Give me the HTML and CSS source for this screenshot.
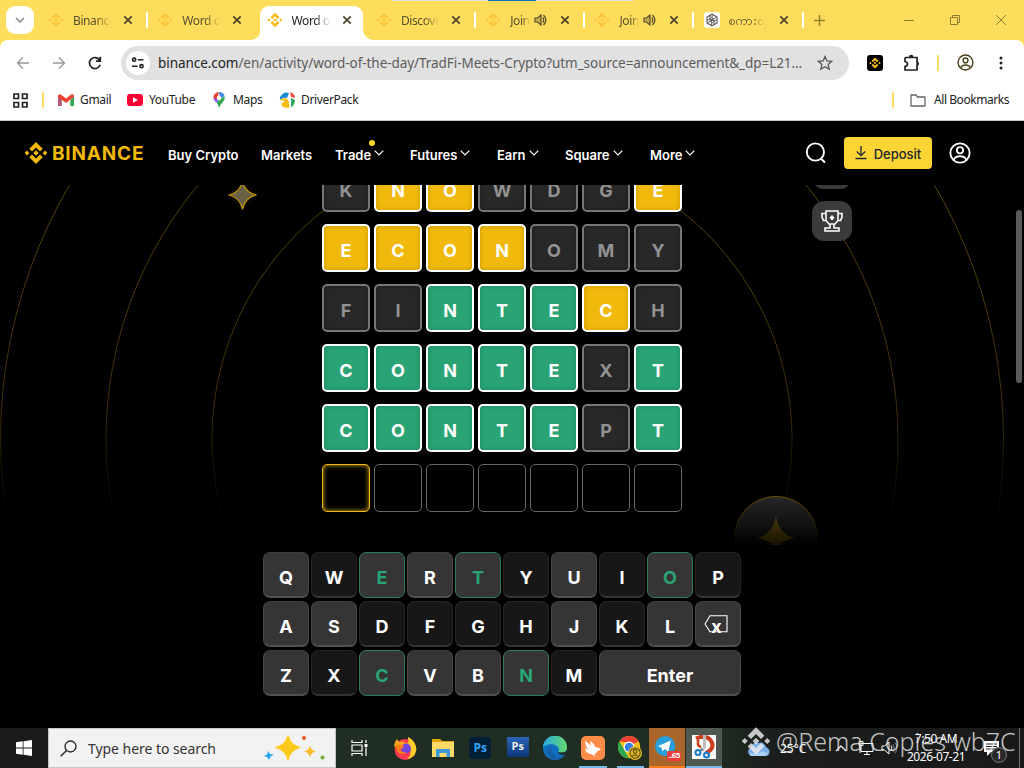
FILE: index.html
```html
<!DOCTYPE html>
<html lang="en">
<head>
<meta charset="utf-8">
<title>Word of the Day</title>
<link rel="stylesheet" href="styles.css">
</head>
<body>
<svg class="defs" aria-hidden="true">
  <symbol id="bnb" viewBox="0 0 24 24"><path d="M12 1l6.7 6.7-2.7 2.7-4-4-4 4-2.7-2.7zM3 9.6L5.4 12 3 14.4.6 12zM12 9.3l2.7 2.7-2.7 2.7L9.3 12zM21 9.6l2.4 2.4-2.4 2.4-2.4-2.4zM8 13.6l4 4 4-4 2.7 2.7L12 23l-6.7-6.7z"/></symbol>
  <symbol id="x" viewBox="0 0 10 10"><path d="M1.3 1.3l7.4 7.4M8.7 1.3L1.3 8.7" fill="none" stroke="currentColor" stroke-width="1.7"/></symbol>
  <symbol id="audio" viewBox="0 0 14 12"><path d="M1 4h2.500L7 1v10L3.500 8H1z" fill="currentColor" fill-opacity=".35" stroke="currentColor" stroke-width="1.2"/><path d="M8.700 3.500q2 2.500 0 5M9.500 1q4.800 5 0 10" fill="none" stroke="currentColor" stroke-width="1.300"/></symbol>
  <symbol id="chev" viewBox="0 0 10 6"><path d="M.7.7L5 5 9.300.7" fill="none" stroke="currentColor" stroke-width="1.200"/></symbol>
  <symbol id="person" viewBox="0 0 24 24"><g fill="none" stroke="currentColor" stroke-width="2"><circle cx="12" cy="12" r="10.500"/><circle cx="12" cy="9" r="3.400"/><path d="M5 19.500q2-4 7-4t7 4"/></g></symbol>
</svg>

<header class="tabstrip">
  <div class="tab-search"><svg viewBox="0 0 10 6"><path d="M1 1l4 4 4-4" fill="none" stroke="#8a8a8a" stroke-width="1.600"/></svg></div>
  <div class="tabs">
    <div class="tab"><svg class="fav"><use href="#bnb"/></svg><span class="title">Binance</span><svg class="close"><use href="#x"/></svg><i class="sep"></i></div>
    <div class="tab"><svg class="fav"><use href="#bnb"/></svg><span class="title">Word of</span><svg class="close"><use href="#x"/></svg></div>
    <div class="tab active"><svg class="fav"><use href="#bnb"/></svg><span class="title">Word of</span><svg class="close"><use href="#x"/></svg></div>
    <div class="tab"><svg class="fav"><use href="#bnb"/></svg><span class="title">Discover</span><svg class="close"><use href="#x"/></svg><i class="sep"></i></div>
    <div class="tab"><svg class="fav"><use href="#bnb"/></svg><span class="title short">Join t</span><svg class="sound"><use href="#audio"/></svg><svg class="close"><use href="#x"/></svg><i class="sep"></i></div>
    <div class="tab"><svg class="fav"><use href="#bnb"/></svg><span class="title short">Join t</span><svg class="sound"><use href="#audio"/></svg><svg class="close"><use href="#x"/></svg><i class="sep"></i></div>
    <div class="tab"><svg class="gpt" viewBox="0 0 16 16"><rect width="16" height="16" rx="3" fill="#fff"/><g fill="none" stroke="#555" stroke-width=".8"><path d="M8 2.200l5 2.900v5.800l-5 2.900-5-2.900V5.100z" stroke-width="1.100" stroke-linejoin="round"/><path d="M6 3.200v5.900l4.200 2.500M12.700 5L7.500 8v5M4.800 6.200L10 9.200l3-1.700M10 12.700V7L5.800 4.400M3.200 11l5-3V3M11.200 9.800L6 6.800 3 8.500"/></g></svg><span class="title my">စကားလုံး</span><svg class="close"><use href="#x"/></svg><i class="sep"></i></div>
  </div>
  <svg class="plus" viewBox="0 0 11 11"><path d="M5.500 0v11M0 5.500h11" stroke="#94812f" stroke-width="1.500"/></svg>
  <div class="win">
    <svg viewBox="0 0 12 12"><path d="M1 6.500h10"/></svg>
    <svg viewBox="0 0 12 12"><path d="M1.500 3.500h7v7h-7zM3.500 3.500v-2h7v7h-2"/></svg>
    <svg viewBox="0 0 12 12"><path d="M1 1l10 10M11 1L1 11"/></svg>
  </div>
  <div class="progress"></div>
</header>

<div class="toolbar">
  <svg class="nav-ic dim" viewBox="0 0 14 14"><path d="M13 7H2M7 1.500L1.500 7 7 12.500"/></svg>
  <svg class="nav-ic dim" viewBox="0 0 14 14"><path d="M1 7h11M7 1.500L12.500 7 7 12.500"/></svg>
  <svg class="nav-ic" viewBox="0 0 14 14"><path d="M12.200 8.800A5.500 5.500 0 1 1 11.600 4M12.300.8v4.400H8"/></svg>
  <div class="omnibox">
    <div class="site"><svg viewBox="0 0 14 12"><g fill="none" stroke="#222" stroke-width="1.600"><circle cx="3.200" cy="2.700" r="1.600"/><path d="M7 2.700h5.500M1 9.200h5.500"/><circle cx="10.500" cy="9.200" r="1.600"/></g></svg></div>
    <span class="url"><b>binance.com</b>/en/activity/word-of-the-day/TradFi-Meets-Crypto?utm_source=announcement&amp;_dp=L21...</span>
    <svg class="star" viewBox="0 0 16 16"><path d="M8 1.500l1.900 4.400 4.800.4-3.600 3.200 1.100 4.700L8 11.700l-4.200 2.500 1.100-4.700L1.300 6.300l4.800-.4z" fill="none" stroke="#555" stroke-width="1.300"/></svg>
  </div>
  <div class="ext"><svg><use href="#bnb"/></svg></div>
  <svg class="puzzle" viewBox="0 0 18 18"><path d="M2 3.500h5M9.500 3.500H14v4.800M14 11v5H2v-3.500q2.500-.5 2.500-2.500T2 7.500v-4" fill="none" stroke="#222" stroke-width="1.700"/><path d="M6 4.300V3a2.200 2.200 0 0 1 4.400 0v1.300zM13.300 7.500h1a2.200 2.200 0 0 1 0 4.300h-1z" fill="#222"/></svg>
  <i class="bar"></i>
  <svg class="profile"><use href="#person"/></svg>
  <svg class="dots" viewBox="0 0 4 14"><circle cx="2" cy="2" r="1.500"/><circle cx="2" cy="7" r="1.500"/><circle cx="2" cy="12" r="1.500"/></svg>
</div>

<div class="bookmarks">
  <svg class="apps" viewBox="0 0 15 15"><path d="M1 1h4.500v4.500H1zM9.500 1H14v4.500H9.500zM1 9.500h4.500V14H1zM9.500 9.500H14V14H9.500z" fill="none" stroke="#222" stroke-width="1.700"/></svg>
  <i class="bar"></i>
  <div class="bm gmail"><svg viewBox="0 0 16 12"><path d="M0 12V1.500Q1-.5 3.500 1L8 4.500 12.500 1Q15-.5 16 1.500V3L8 9 3.700 5.800V12z" fill="#ea4335"/><path d="M0 3.500l3.700 2.300V12H0z" fill="#4285f4" opacity=".35"/><path d="M12.300 6L16 3v9h-3.700z" fill="#34a853"/></svg><span>Gmail</span></div>
  <div class="bm youtube"><svg viewBox="0 0 16 12"><rect width="16" height="12" rx="3" fill="#ff0033"/><path d="M6 3.300v5.400L11 6z" fill="#fff"/></svg><span>YouTube</span></div>
  <div class="bm maps"><svg viewBox="0 0 12 16"><path d="M6 0a5.700 5.700 0 0 0-5.700 5.700L4 9z" fill="#ea4335"/><path d="M6 0a5.700 5.700 0 0 1 5.500 4L7 7z" fill="#4285f4"/><path d="M11.500 4q1 3.500-2 6.500T6 16q-.5-3-2.500-5.500z" fill="#34a853"/><path d="M.3 5.700Q.3 8 3.300 10.800L6 8z" fill="#8a5cf5"/><circle cx="6" cy="5.700" r="2.200" fill="#fff"/></svg><span>Maps</span></div>
  <div class="bm driver"><svg viewBox="0 0 16 16"><path d="M1 5Q5-1 10 1L8 6Q4 5 1 8z" fill="#1587d3"/><path d="M11 0q5 2 5 6l-4-1z" fill="#ed483c"/><path d="M12 6l4 2q0 5-4 7.500z" fill="#30a75b"/><path d="M0 8q5-3 8-1t2 9Q3 16 2 12l4-3z" fill="#f6bd16"/></svg><span>DriverPack</span></div>
  <div class="all"><i class="bar"></i><svg viewBox="0 0 16 13"><path d="M1 1h5l1.500 2H15v9H1z" fill="none" stroke="#666" stroke-width="1.300" stroke-linejoin="round"/></svg><span>All Bookmarks</span></div>
</div>

<main class="page">
  <nav class="site-nav">
    <div class="logo"><svg><use href="#bnb"/></svg><span>BINANCE</span></div>
    <div class="item i1"><span>Buy Crypto</span></div>
    <div class="item i2"><span>Markets</span></div>
    <div class="item i3"><span>Trade</span><svg><use href="#chev"/></svg><i class="new"></i></div>
    <div class="item i4"><span>Futures</span><svg><use href="#chev"/></svg></div>
    <div class="item i5"><span>Earn</span><svg><use href="#chev"/></svg></div>
    <div class="item i6"><span>Square</span><svg><use href="#chev"/></svg></div>
    <div class="item i7"><span>More</span><svg><use href="#chev"/></svg></div>
    <div class="actions">
      <svg class="search" viewBox="0 0 22 22"><path d="M15.800 16.500l4.200 4M19 10a8.600 8.600 0 1 1-17.200 0A8.600 8.600 0 0 1 19 10z" fill="none" stroke="#fff" stroke-width="1.900"/></svg>
      <button class="deposit"><svg viewBox="0 0 12 14"><path d="M6 0v9.500M1.800 5.500L6 9.700l4.200-4.200M.5 12.500h11" fill="none" stroke="#202630" stroke-width="1.300"/></svg><span>Deposit</span></button>
      <svg class="user"><use href="#person"/></svg>
    </div>
  </nav>
  <section class="game">
    <svg class="orbits" viewBox="0 185 1024 543">
      <defs>
        <linearGradient id="fade" gradientUnits="userSpaceOnUse" x1="0" y1="185" x2="0" y2="548"><stop offset="0" stop-color="#57430c"/><stop offset=".65" stop-color="#3c2d08"/><stop offset="1" stop-color="#0a0700" stop-opacity="0"/></linearGradient>
        <linearGradient id="orb" x1="0" y1="0" x2="0" y2="1"><stop offset="0" stop-color="#272727"/><stop offset=".95" stop-color="#020202"/></linearGradient>
        <linearGradient id="orbline" x1="0" y1="0" x2="0" y2="1"><stop offset="0" stop-color="#6b5108"/><stop offset=".95" stop-color="#000"/></linearGradient>
        <radialGradient id="glow"><stop offset="0" stop-color="#b98b0c" stop-opacity=".6"/><stop offset="1" stop-color="#000" stop-opacity="0"/></radialGradient>
        <linearGradient id="starfade" x1="0" y1="0" x2="0" y2="1"><stop offset="0" stop-color="#4a390a"/><stop offset="1" stop-color="#151000"/></linearGradient>
      </defs>
      <g fill="none" stroke="url(#fade)" stroke-width="1"><circle cx="502" cy="439" r="290"/><circle cx="502" cy="439" r="396"/><circle cx="502" cy="439" r="501.500"/></g>
      <circle cx="242.500" cy="195" r="15" fill="url(#glow)" opacity=".6"/>
      <path d="M242.500 181Q245 193 256.500 195Q245 197 242.500 209.500Q240 197 228.500 195Q240 193 242.500 181z" fill="#686044" stroke="#c4920d" stroke-width="1.200"/>
      <path d="M734.500 545v-7a41.500 41.500 0 0 1 83 0v7" fill="url(#orb)" stroke="url(#orbline)"/>
      <path d="M776 516Q779 535 795 538Q784 540 780 545H772Q768 540 757 538Q773 535 776 516z" fill="url(#starfade)"/>
    </svg>
    <div class="board">
      <b class="g">K</b><b class="y">N</b><b class="y">O</b><b class="g">W</b><b class="g">D</b><b class="g">G</b><b class="y">E</b>
      <b class="y">E</b><b class="y">C</b><b class="y">O</b><b class="y">N</b><b class="g">O</b><b class="g">M</b><b class="g">Y</b>
      <b class="g">F</b><b class="g">I</b><b class="c">N</b><b class="c">T</b><b class="c">E</b><b class="y">C</b><b class="g">H</b>
      <b class="c">C</b><b class="c">O</b><b class="c">N</b><b class="c">T</b><b class="c">E</b><b class="g">X</b><b class="c">T</b>
      <b class="c">C</b><b class="c">O</b><b class="c">N</b><b class="c">T</b><b class="c">E</b><b class="g">P</b><b class="c">T</b>
      <b class="now"></b><b></b><b></b><b></b><b></b><b></b><b></b>
    </div>
    <div class="keys">
      <kbd>Q</kbd><kbd class="used">W</kbd><kbd class="hit">E</kbd><kbd>R</kbd><kbd class="hit">T</kbd><kbd class="used">Y</kbd><kbd>U</kbd><kbd class="used">I</kbd><kbd class="hit">O</kbd><kbd class="used">P</kbd>
      <kbd>A</kbd><kbd>S</kbd><kbd class="used">D</kbd><kbd class="used">F</kbd><kbd class="used">G</kbd><kbd class="used">H</kbd><kbd>J</kbd><kbd class="used">K</kbd><kbd>L</kbd><kbd class="back"><svg viewBox="0 0 24 18"><path d="M6 .8h17v16H6L1 9z" fill="none" stroke="#fff" stroke-width="1.100"/></svg><span>x</span></kbd>
      <kbd>Z</kbd><kbd class="used">X</kbd><kbd class="hit">C</kbd><kbd>V</kbd><kbd>B</kbd><kbd class="hit">N</kbd><kbd class="used">M</kbd><kbd class="enter">Enter</kbd>
    </div>
    <div class="float">
      <div></div>
      <div><svg viewBox="0 0 22 22"><g fill="none" stroke="#fff" stroke-width="1.600"><path d="M5 1h12v9.500l-3 3.500H8l-3-3.500zM5 3.500H1V7l1.500 3.500H5M17 3.500h4V7l-1.500 3.500H17M9 14v4H4v3h14v-3h-5v-4"/></g><path d="M11 5l2.500 2.800L11 10.500 8.500 7.800z" fill="#fff"/></svg></div>
    </div>
    <div class="scroll"></div>
  </section>
</main>

<footer class="taskbar">
  <div class="start"><svg viewBox="0 0 16 16"><path d="M0 2.300L6.700 1.300V7.600H0zM7.500 1.200L16 0v7.600H7.500zM0 8.400h6.700v6.300L0 13.700zM7.500 8.400H16V16l-8.500-1.200z" fill="#fff"/></svg></div>
  <div class="find">
    <svg class="mag" viewBox="0 0 17 17"><circle cx="10.500" cy="6.500" r="5.500" fill="none" stroke="#222" stroke-width="1.300"/><path d="M6.700 10.300L.7 16.300" stroke="#222" stroke-width="1.300"/></svg>
    <span>Type here to search</span>
    <svg class="sparks" viewBox="0 0 62 24"><path d="M24 0q2 9 11.500 11.500Q26 14 24 23.500 22 14 12 11.500 22 9 24 0z" fill="#fdc91c" stroke="#fdc91c" stroke-width="1.500" stroke-linejoin="round"/><path d="M46 9.500q1 5 6 6-5 1-6 6-1-5-6-6 5-1 6-6z" fill="#f9bd2c"/><path d="M4 15l2 3 4 .5-3.500 2L5 24l-2-3-3-1 3-1.500z" fill="#29a4ee"/><circle cx="40" cy="2" r="2" fill="#e8591c"/><circle cx="58.500" cy="21.500" r="2" fill="#74ae3e"/></svg>
  </div>
  <div class="app view"><svg viewBox="0 0 17 16" width="17" height="16"><path d="M1 0v2.500h10V0M1 5h10v6H1zM1 16v-2.500h10V16M15 0v3M15 7.500V16" fill="none" stroke="#fff" stroke-width="1.200"/><path d="M13.500 4h3v3h-3z" fill="#fff"/></svg></div>
  <div class="app"><svg viewBox="0 0 24 24"><circle cx="12" cy="13.500" r="10.500" fill="#ff3750"/><path d="M1 10Q2 5 4 3l2 3q4-2 7 1l5-1-3-5q9 5 8 14-1 4-3 6 0-9-8-11L4 12z" fill="#ffa41c"/><path d="M15 1q8 4 8.500 13Q20 23 14 23q6-5 2-11z" fill="#ffcf2b"/><circle cx="13" cy="12.500" r="5" fill="#7444dc"/><path d="M2 10q5-3 9 0-1 3-4 3 2 4 7 3.500Q9 20 4.500 16z" fill="#ff7b18"/></svg></div>
  <div class="app"><svg viewBox="0 0 24 24"><path d="M1 3h8l2 2h12v16H1z" fill="#e3a50c"/><path d="M1 6h22v15H1z" fill="#ffda68"/><path d="M5 13h14v8h-3.500v-4h-7v4H5z" fill="#3b98dc"/></svg></div>
  <div class="app"><span class="ps">Ps</span></div>
  <div class="app"><span class="ps old">Ps</span></div>
  <div class="app"><svg viewBox="0 0 24 24"><defs><linearGradient id="eg"><stop stop-color="#28a8e4"/><stop offset="1" stop-color="#63da6a"/></linearGradient></defs><circle cx="12" cy="12" r="12" fill="#116fc2"/><path d="M0 11A12 12 0 0 1 24 12q-1 6-9 4 2-2 0-5-6-6-15 0z" fill="url(#eg)"/><path d="M9 11q-2 8 6 10 4 0 6.500-2A12 12 0 0 1 7 22Q1 12 9 11z" fill="#185da7"/><path d="M24 13q-1 5-9 3 1 4 8 2.500z" fill="#202d23"/></svg></div>
  <div class="app open"><svg viewBox="0 0 24 24"><rect width="24" height="24" rx="5" fill="#ff8d49"/><path d="M4 5q4 2 6 5L9 5q4 2 5 6 4 0 6 2.500l-3.500 1.500q-1 3-3.500 3.500l2 2.500-4-2.500Q4 17 4 12l4 2.500Q4 10 4 5z" fill="#fff"/></svg></div>
  <div class="app open"><svg viewBox="0 0 26 26"><circle cx="12" cy="12" r="12" fill="#fbc116"/><path d="M1.600 6A12 12 0 0 1 22.400 6L12 7z" fill="#ea4335"/><path d="M1.600 6l5.200 9L12 24A12 12 0 0 1 1.600 6z" fill="#2ca94f"/><path d="M22.400 6H12v5z" fill="#ea4335"/><circle cx="12" cy="12" r="6" fill="#fff"/><circle cx="12" cy="12" r="4.700" fill="#367ff0"/><circle cx="18.500" cy="18.500" r="7.500" fill="#e8bd25"/><g fill="none" stroke="#5d4910" stroke-width="1.200"><circle cx="18.500" cy="18.500" r="5.500"/><circle cx="18.500" cy="16.800" r="2"/><path d="M15 22q3.500-3 7 0"/></g></svg></div>
  <div class="app tg"><svg viewBox="0 0 26 26"><circle cx="11" cy="11" r="11" fill="#289fdb"/><path d="M3 11L17 5l-2.500 12-4-3L8 16.500 7 12.500z" fill="#fff"/></svg><span class="count">..65</span></div>
  <div class="app snip"><svg viewBox="0 0 24 24"><path d="M0 0h24v24H0z" fill="#fafafa"/><path d="M4 3.500q9-4 14 1 5 6 0 11l-4 2.500" fill="none" stroke="#c93f1e" stroke-width="4"/><path d="M6 5v4q0 2 3 3" fill="none" stroke="#c93f1e" stroke-width="2.500"/><path d="M9.500 12l3 3.500-5 1z" fill="#888"/><path d="M11 0h3v12l-2 3-1-3z" fill="#bbb"/><g fill="none" stroke="#1478c8" stroke-width="2"><circle cx="6" cy="17.500" r="2.500"/><circle cx="14.500" cy="20" r="2.500"/></g></svg></div>
  <div class="tray">
    <svg class="cloud" viewBox="0 0 28 18"><path d="M5 17a5 5 0 0 1 0-9Q8 1 14 3q5-2 8 5a4.700 4.700 0 0 1 0 9z" fill="#78aee8"/><path d="M5 13q6 3 12-1 6 2 7 2-1 3-4 3H5z" fill="#aacff6"/></svg>
    <span class="temp">25°C</span>
    <svg class="up" viewBox="0 0 12 7"><path d="M1 6l5-5 5 5" fill="none" stroke="#eee" stroke-width="1.300"/></svg>
    <svg class="net" viewBox="0 0 16 14"><path d="M3 2.500h12v8H3zM6 13.500h6M9 10.500v3M1 .5h4v4H1zM2 5v7" fill="none" stroke="#fff"/></svg>
    <svg class="vol" viewBox="0 0 16 14"><path d="M1 5h2.500L8 1v12L3.500 9H1z" fill="none" stroke="#fff"/><path d="M10 4.500q2 2.500 0 5" fill="none" stroke="#fff"/><path d="M12 3q3 4 0 8M14 1.500q4 5.500 0 11" fill="none" stroke="#777"/></svg>
    <div class="clock"><span>7:50 AM</span><span>2026-07-21</span></div>
    <div class="note"><svg viewBox="0 0 15 15"><path d="M0 0h15v11H7l-4 4v-4H0z" fill="#fff"/><path d="M2 3h11M2 5.500h11M2 8h11" stroke="#222"/></svg><span>1</span></div>
    <i class="edge"></i>
  </div>
  <div class="watermark"><svg><use href="#bnb"/></svg><span>@Rema Copies wb7C</span></div>
</footer>
</body>
</html>
```
FILE: styles.css
```css
* { box-sizing: border-box; }
body { margin: 0; width: 1024px; height: 768px; overflow: hidden; display: flex; flex-direction: column; background: #ffdd5c; font: 12px "Noto Sans", "Open Sans", sans-serif; color: #222; }
svg { display: block; flex: none; }
i { display: block; flex: none; }
.defs { position: absolute; width: 0; height: 0; }

/* Tabs */
.tabstrip { position: relative; height: 40px; flex: none; display: flex; align-items: center; background: #ffdd5c; }
.tab-search { width: 28px; height: 28px; margin: 0 5px 0 6px; border-radius: 9px; background: #fff; display: flex; align-items: center; justify-content: center; }
.tab-search svg { width: 10px; height: 6px; }
.tabs { display: flex; height: 40px; width: 765px; }
.tab { position: relative; width: 109.300px; flex: none; height: 40px; padding-left: 9px; display: flex; align-items: center; color: #58502f; }
.fav { width: 16px; height: 16px; fill: #fbc53a; }
.title { width: 40px; margin-left: 9px; overflow: hidden; white-space: nowrap; font-size: 12px; line-height: 18px; padding-top: 1px; letter-spacing: -.4px; -webkit-mask-image: linear-gradient(90deg, #000 58%, transparent 96%); mask-image: linear-gradient(90deg, #000 58%, transparent 96%); }
.title.short { width: 21px; }
.title.my { font-size: 12.500px; }
.sound { width: 14px; height: 12px; margin-left: 3px; margin-right: 2px; }
.close { width: 10px; height: 10px; margin-left: 10px; color: #4a432b; }
.sep { width: 2px; height: 16px; background: #fff; margin-left: 13px; }
.gpt { width: 16px; height: 16px; }
.active { color: #222; z-index: 1; }
.active::before { content: ""; position: absolute; z-index: -1; left: 2.400px; top: 6px; width: 103px; height: 34px; border-radius: 9px 9px 0 0; background: #fff; }
.active::after { content: ""; position: absolute; z-index: -2; left: -7.100px; bottom: 0; width: 122px; height: 10px; background: radial-gradient(circle at 0 0, transparent 9.500px, #fff 10px) 0 0 / 10px 10px no-repeat, radial-gradient(circle at 100% 0, transparent 9.500px, #fff 10px) 100% 0 / 10px 10px no-repeat; }
.active .fav { fill: #fdb913; }
.plus { width: 11px; height: 11px; margin-left: 10px; }
.win { margin-left: auto; margin-right: 17px; display: flex; gap: 34px; }
.win svg { width: 12px; height: 12px; fill: none; stroke: #8d7b32; }
.progress { position: absolute; left: 392px; top: 0; width: 241px; height: 1px; background: linear-gradient(90deg, #e0e0e0 96px, #0c75c8 96px 144px, #e0e0e0 144px); }

/* Toolbar */
.toolbar { height: 45px; flex: none; background: #fff; border-radius: 8px 8px 0 0; display: flex; align-items: center; padding-left: 16px; }
.nav-ic { width: 14px; height: 14px; margin-right: 22px; fill: none; stroke: #222; stroke-width: 1.700; }
.nav-ic.dim { stroke: #999; stroke-width: 1.400; }
.omnibox { width: 728px; height: 34px; margin-left: -3px; border-radius: 17px; background: #e1e1e1; display: flex; align-items: center; padding-left: 5px; }
.site { width: 24px; height: 24px; border-radius: 50%; background: #fff; display: flex; align-items: center; justify-content: center; }
.site svg { width: 14px; height: 12px; }
.url { width: 645px; margin-left: 8px; font-size: 13.500px; letter-spacing: -.06px; white-space: nowrap; color: #5c5c5c; }
.url b { font-weight: 400; color: #222; }
.star { width: 16px; height: 16px; margin-left: 14px; }
.ext { width: 16px; height: 16px; margin-left: 18px; border-radius: 3px; background: #000; display: flex; align-items: center; justify-content: center; }
.ext svg { width: 12px; height: 12px; fill: #fcc21b; }
.puzzle { width: 18px; height: 18px; margin-left: 20px; }
.bar { width: 2px; height: 16px; background: #ffdd5c; }
.toolbar .bar { margin-left: 16px; }
.profile { width: 17px; height: 17px; margin-left: 18px; color: #4e441c; }
.dots { width: 4px; height: 14px; margin-left: 25px; fill: #222; }

/* Bookmarks */
.bookmarks { height: 35px; flex: none; background: #fff; display: flex; align-items: center; padding: 0 15px 5px 13px; }
.apps { width: 15px; height: 15px; margin: 0 14px 0 0; }
.bm { display: flex; align-items: center; font-size: 12px; white-space: nowrap; }
.bm span { letter-spacing: -.35px; margin-top: -1px; }
.gmail { width: 69px; margin-left: 14px; gap: 6px; }
.gmail svg, .youtube svg { width: 16px; height: 12px; }
.youtube { width: 86px; gap: 6px; }
.maps { width: 66px; gap: 8px; }
.maps svg { width: 12px; height: 16px; }
.driver { gap: 6px; }
.driver svg { width: 16px; height: 16px; }
.all { display: flex; align-items: center; margin-left: auto; white-space: nowrap; letter-spacing: -.45px; }
.all span { margin-top: -1px; }
.all svg { width: 16px; height: 13px; margin: 0 8px 0 16px; }

/* Site */
.page { height: 608px; flex: none; background: #000; border-top: 1px solid #c9c9c9; display: flex; flex-direction: column; font-family: Inter, "Liberation Sans", sans-serif; }
.site-nav { height: 64px; flex: none; display: flex; align-items: center; padding-left: 24px; color: #fff; font-size: 13px; font-weight: 600; }
.logo { width: 144px; display: flex; align-items: center; color: #f0b90b; font-size: 19px; font-weight: 700; letter-spacing: .8px; gap: 4px; white-space: nowrap; }
.logo svg { width: 24px; height: 24px; fill: #f0b90b; }
.item { position: relative; display: flex; align-items: center; gap: 3px; padding-top: 3px; white-space: nowrap; }
.item svg { width: 10px; height: 6px; margin-top: -4px; }
.i1 { width: 93px; } .i2 { width: 74px; } .i3 { width: 75px; } .i4 { width: 87px; } .i5 { width: 68px; } .i6 { width: 85px; } .i7 { width: 46px; }
.new { position: absolute; left: 34px; top: -4px; width: 6px; height: 6px; border-radius: 50%; background: #fcd535; }
.actions { margin-left: auto; margin-right: 53px; display: flex; align-items: center; gap: 17px; }
.search { width: 22px; height: 22px; }
.deposit { width: 88px; height: 32px; border: 0; border-radius: 4px; background: #fcd535; color: #202630; display: flex; align-items: center; justify-content: center; gap: 7px; padding: 0; font: 500 13px Inter, sans-serif; }
.deposit span { margin-top: 2px; }
.deposit svg { width: 12px; height: 14px; }
.user { width: 22px; height: 22px; }

/* Puzzle */
.game { position: relative; height: 543px; overflow: hidden; }
.orbits { position: absolute; left: 0; top: 0; width: 1024px; height: 543px; }
.board { position: relative; display: grid; grid-template-columns: repeat(7, 48px); grid-auto-rows: 48px; gap: 12px 4px; margin: -21px 0 0 322px; }
.board b { border: 1px solid #666; border-radius: 5px; background: #000; color: #fff; display: flex; align-items: center; justify-content: center; padding-top: 5px; font-size: 18px; font-weight: 700; }
.board .g { border: 2px solid #777; background: #282828; color: #929292; box-shadow: inset 0 0 4px #1b1b1b; }
.board .y { border: 2px solid #fff; background: #f0b90b; box-shadow: inset 0 0 4px #c99806; }
.board .c { border: 2px solid #fff; background: #2aa474; box-shadow: inset 0 0 4px #1b855b; }
.board .now { border: 1px solid #f0b90b; box-shadow: inset 0 0 5px #dca90b; }
.keys { position: relative; display: grid; grid-template-columns: repeat(10, 46px); grid-auto-rows: 46px; gap: 3px 2px; margin: 40px 0 0 263px; }
.keys kbd { display: flex; align-items: center; justify-content: center; padding-top: 5px; border: 1px solid #484848; border-top-color: #3e3e3e; border-bottom: 2px solid #505050; border-radius: 7px; background: #353535; color: #fff; font: 700 18px Inter, sans-serif; }
.keys .used { background: #171717; border-color: #242424 #242424 #333; }
.keys .hit { border: 1px solid #287d5d; color: #2aa474; }
.keys .enter { grid-column: span 3; }
.back svg { width: 24px; height: 18px; margin: -4px -17px 0 -10px; }
.float { position: absolute; left: 812px; top: -36px; display: flex; flex-direction: column; gap: 12px; }
.float div { width: 40px; height: 40px; border-radius: 12px; background: #3b3b3b; display: flex; align-items: center; justify-content: center; }
.float svg { width: 22px; height: 22px; }
.scroll { position: absolute; left: 1016px; top: 25px; width: 6px; height: 173px; border-radius: 3px; background: #5b5b5b; }

/* Taskbar */
.taskbar { position: relative; height: 40px; flex: none; display: flex; background: linear-gradient(90deg, #1b1b1b 0 48px, #202d23 336px 700px, #1b1e1c 780px, #191919); }
.start { width: 48px; display: flex; align-items: center; justify-content: center; }
.start svg { width: 16px; height: 16px; }
.find { width: 288px; background: #f2f2f2; border: 1px solid #c5c5c5; display: flex; align-items: center; padding-left: 11px; }
.mag { width: 17px; height: 17px; }
.find span { width: 170px; margin-left: 11px; font-size: 14px; letter-spacing: -.05px; color: #333; white-space: nowrap; }
.sparks { width: 62px; height: 24px; margin-left: 6px; }
.app { position: relative; width: 37.500px; flex: none; display: flex; align-items: center; justify-content: center; }
.app svg { width: 24px; height: 24px; }
.view { width: 50.500px; padding-right: 4px; }
.view svg { width: 17px; height: 16px; }
.ps { width: 22px; height: 22px; border-radius: 4px; background: #001e36; color: #31a8ff; font: 700 12px/21px "Open Sans", sans-serif; text-align: center; }
.ps.old { height: 20px; border-radius: 0; background: linear-gradient(#2864b5, #0e3679); color: #eee; font-size: 11px; line-height: 18px; margin-top: -3px; }
.open { border: solid transparent; border-width: 0 5px; background: linear-gradient(#76b9ed, #76b9ed) 0 100% / 100% 2px no-repeat; }
.tg { width: 36px; background: #a9652a; border-bottom: 2px solid #ff7d19; }
.tg svg { margin-top: 2px; }
.count { position: absolute; left: 18px; top: 23px; width: 14px; height: 10px; border-radius: 2px; background: #ed3b3b; color: #fff; font: 700 8px/10px "Liberation Sans", sans-serif; text-align: center; letter-spacing: -.5px; }
.snip { width: 36px; margin-left: 1px; background: #505951; border-bottom: 2px solid #76b9ed; }
.tray { width: 302px; display: flex; align-items: center; color: #fff; }
.cloud { width: 26px; height: 17px; margin-left: 24px; }
.temp { width: 50px; margin-left: 8px; font-size: 12px; }
.up { width: 12px; height: 7px; margin-left: 5px; }
.net { width: 16px; height: 14px; margin-left: 11px; }
.vol { width: 16px; height: 14px; margin-left: 7px; }
.clock { width: 70px; margin-left: 4px; display: flex; flex-direction: column; align-items: center; font-size: 12px; line-height: 18px; letter-spacing: -.45px; white-space: nowrap; }
.note { position: relative; margin-left: 13px; }
.note svg { width: 15px; height: 15px; }
.note span { position: absolute; left: 7px; top: 6px; width: 16px; height: 16px; border: 1px solid #777; border-radius: 50%; background: #292929; font-size: 11px; line-height: 14px; text-align: center; }
.edge { width: 1px; height: 40px; margin-left: 20px; background: #777; }
.watermark { position: absolute; left: 741px; top: -4px; display: flex; align-items: center; gap: 5px; color: rgba(235, 235, 235, .82); white-space: nowrap; }
.watermark svg { width: 30px; height: 30px; fill: currentColor; }
.watermark span { font: 300 25px/34px "Noto Sans", sans-serif; letter-spacing: 0; }
```
